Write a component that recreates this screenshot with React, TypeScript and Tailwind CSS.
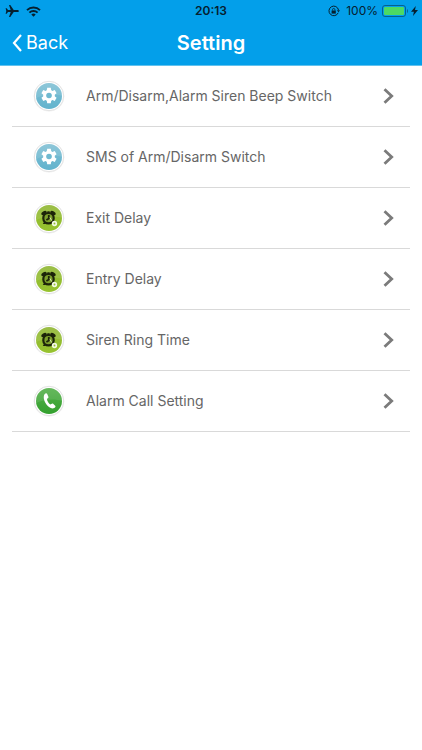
import React from 'react';

type IconKind = 'gear' | 'clock' | 'phone';

const settings: { id: string; name: string; icon: IconKind }[] = [
  { id: 'beep', name: 'Arm/Disarm,Alarm Siren Beep Switch', icon: 'gear' },
  { id: 'sms', name: 'SMS of Arm/Disarm Switch', icon: 'gear' },
  { id: 'exit-delay', name: 'Exit Delay', icon: 'clock' },
  { id: 'entry-delay', name: 'Entry Delay', icon: 'clock' },
  { id: 'ring-time', name: 'Siren Ring Time', icon: 'clock' },
  { id: 'call', name: 'Alarm Call Setting', icon: 'phone' },
];

const badgeColors = {
  gear: { top: '#80c0d4', bottom: '#62b3cd' },
  clock: { top: '#8fb632', bottom: '#97c32f' },
  phone: { top: '#55b04a', bottom: '#33a02e' },
};

function GearGlyph() {
  return (
    <g>
      <g fill="#fff">
        <circle cx="16" cy="15.5" r="5.8" />
        {[0, 60, 120, 180, 240, 300].map((angle) => (
          <path key={angle} d="M13.6 11.5L14.2 7.8H17.8L18.4 11.5Z" transform={`rotate(${angle} 16 15.5)`} />
        ))}
      </g>
      <circle cx="16" cy="15.5" r="2.8" fill="#6fb9d0" />
    </g>
  );
}

function ClockGlyph() {
  return (
    <g>
      <g fill="#1c2409">
        <ellipse cx="11" cy="11" rx="3" ry="1.8" transform="rotate(-30 11 11)" />
        <ellipse cx="20" cy="11" rx="3" ry="1.8" transform="rotate(30 20 11)" />
        <path d="M14.3 9.3h2.4v2.5h-2.4z" />
        <path d="M11.3 19.5l-1.5 2.6h2.3l1.4-1.7z" />
      </g>
      <circle cx="15.5" cy="16.2" r="5.2" fill="#7c9f2c" stroke="#1c2409" strokeWidth="2.2" />
      <path d="M15.8 13v3.5l-2.4 1.5" fill="none" stroke="#1c2409" strokeWidth="1.8" />
      <path d="M17 15.5l1.6 3" fill="none" stroke="#dbe8b8" strokeWidth="1" />
      <circle cx="21.5" cy="21.5" r="1.8" fill="#94bd35" stroke="#f3f9e4" strokeWidth="1.7" />
    </g>
  );
}

function PhoneGlyph() {
  return (
    <path
      fill="#fff"
      d="M11.7 8.9c.9-.9 2.1-.9 2.5 0l1.2 2.8c.3.8-.2 1.3-1.1 1.9-.5.5-.3 1.3.2 2.4.6 1.4 1.3 2.4 2.1 3.1.6.5 1.1.4 1.7 0 .8-.6 1.5-.7 2.1-.1l1.8 1.7c.7.8.1 1.7-.9 2.3-1.6.9-3.5.5-5.3-1-2-1.700-3.700-3.900-4.600-6.300-.9-2.600-.9-5.400.3-6.800z"
    />
  );
}

function Badge({ kind }: { kind: IconKind }) {
  const { top, bottom } = badgeColors[kind];
  return (
    <svg className="w-8 h-8 shrink-0" viewBox="0 0 32 32" aria-hidden="true">
      <defs>
        <linearGradient id={`fill-${kind}`} x1="0" y1="0" x2="0" y2="1">
          <stop offset="0" stopColor={top} />
          <stop offset="1" stopColor={bottom} />
        </linearGradient>
      </defs>
      <circle cx="16" cy="16.3" r="15.3" fill="#f1f1f1" />
      <circle cx="16" cy="16" r="14.7" fill="#fff" stroke="#dcdcdc" strokeWidth="0.8" />
      <circle cx="16" cy="16" r="13" fill={`url(#fill-${kind})`} />
      <path d="M3 16a13 13 0 0 1 26 0c-7-2.5-17-2-26 2z" fill="#fff" opacity="0.1" />
      {kind === 'gear' && <GearGlyph />}
      {kind === 'clock' && <ClockGlyph />}
      {kind === 'phone' && <PhoneGlyph />}
    </svg>
  );
}

function StatusBar() {
  return (
    <div className="grid grid-cols-[1fr_auto_1fr] items-center h-[22px] px-1 text-xs text-[#06202f]">
      <div className="flex items-center gap-1.5">
        {/* Airplane mode */}
        <svg className="w-4 h-4" viewBox="0 0 16 16" fill="#06202f" aria-hidden="true">
          <path d="M15 8c0-.7-.9-1.1-2-1.1H9.7L6.3 2H5l1.7 4.9H4L2.7 5.3H1.6L2.3 8l-.7 2.7h1.1L4 9.1h2.7L5 14h1.3l3.4-4.9H13c1.1 0 2-.4 2-1.1z" />
        </svg>
        <svg className="w-[15px] h-[11px]" viewBox="0 0 15 11" aria-hidden="true">
          <g fill="none" stroke="#06202f" strokeWidth="1.9">
            <path d="M1 4.2a9.2 9.2 0 0 1 13 0" />
            <path d="M3.4 6.7a5.8 5.8 0 0 1 8.2 0" />
          </g>
          <path d="M7.5 10.8L5.3 8.6a3.1 3.1 0 0 1 4.4 0z" fill="#06202f" />
        </svg>
      </div>
      <span className="font-semibold">20:13</span>
      <div className="flex items-center justify-end">
        {/* Orientation lock */}
        <svg className="w-3 h-3 mr-1.5" viewBox="0 0 12 12" aria-hidden="true">
          <path d="M10.2 7.8A4.8 4.8 0 1 1 10.5 5" fill="none" stroke="#06202f" />
          <path d="M8.9 5.2h3.1L10.5 7.3z" fill="#06202f" />
          <path d="M3.6 5.5h4.2v3.1H3.6z" fill="#06202f" />
          <path d="M4.5 5.5v-.8a1.2 1.2 0 0 1 2.4 0v.8" fill="none" stroke="#06202f" strokeWidth="0.8" />
        </svg>
        <span>100%</span>
        <svg className="w-[27px] h-3 ml-1" viewBox="0 0 27 12" aria-hidden="true">
          <rect x="0.5" y="0.5" width="23" height="11" rx="2.5" fill="none" stroke="#05618f" />
          <rect x="2" y="2" width="20" height="8" rx="1" fill="#4cd964" />
          <path d="M25 4v4c1.3-.6 1.3-3.4 0-4z" fill="#05618f" />
        </svg>
        <svg className="w-[7px] h-2.5 ml-0.5" viewBox="0 0 7 10" fill="#06202f" aria-hidden="true">
          <path d="M4.8 0L0 5.7h2.9L2 10l5-6H4z" />
        </svg>
      </div>
    </div>
  );
}

export default function App() {
  return (
    <div className="min-h-screen bg-white font-['Inter','Liberation_Sans',sans-serif]">
      <header className="bg-[#039fea] border-b border-[#62c2ee]">
        <StatusBar />
        <div className="grid grid-cols-[1fr_auto_1fr] items-center h-[43px] px-3 pb-0.5 text-white">
          <button className="flex items-center gap-1 text-lg justify-self-start">
            <svg className="w-2.5 h-[18px]" viewBox="0 0 10 18" fill="none" stroke="#fff" strokeWidth="2.2" aria-hidden="true">
              <path d="M9 1L2 9l7 8" />
            </svg>
            Back
          </button>
          <h1 className="text-xl font-semibold">Setting</h1>
        </div>
      </header>

      <ul className="px-3">
        {settings.map((item) => (
          <li key={item.id} className="border-b border-[#d9d9d9]">
            <button className="flex items-center w-full h-[60px] pl-[21px] pr-4 text-left">
              <Badge kind={item.icon} />
              <span className="flex-1 ml-[21px] text-sm text-[#666]">{item.name}</span>
              <svg className="w-[11px] h-4" viewBox="0 0 11 16" fill="none" stroke="#7b7b7b" strokeWidth="2.8" aria-hidden="true">
                <path d="M1.5 1.2L8.7 8l-7.2 6.8" />
              </svg>
            </button>
          </li>
        ))}
      </ul>
    </div>
  );
}
